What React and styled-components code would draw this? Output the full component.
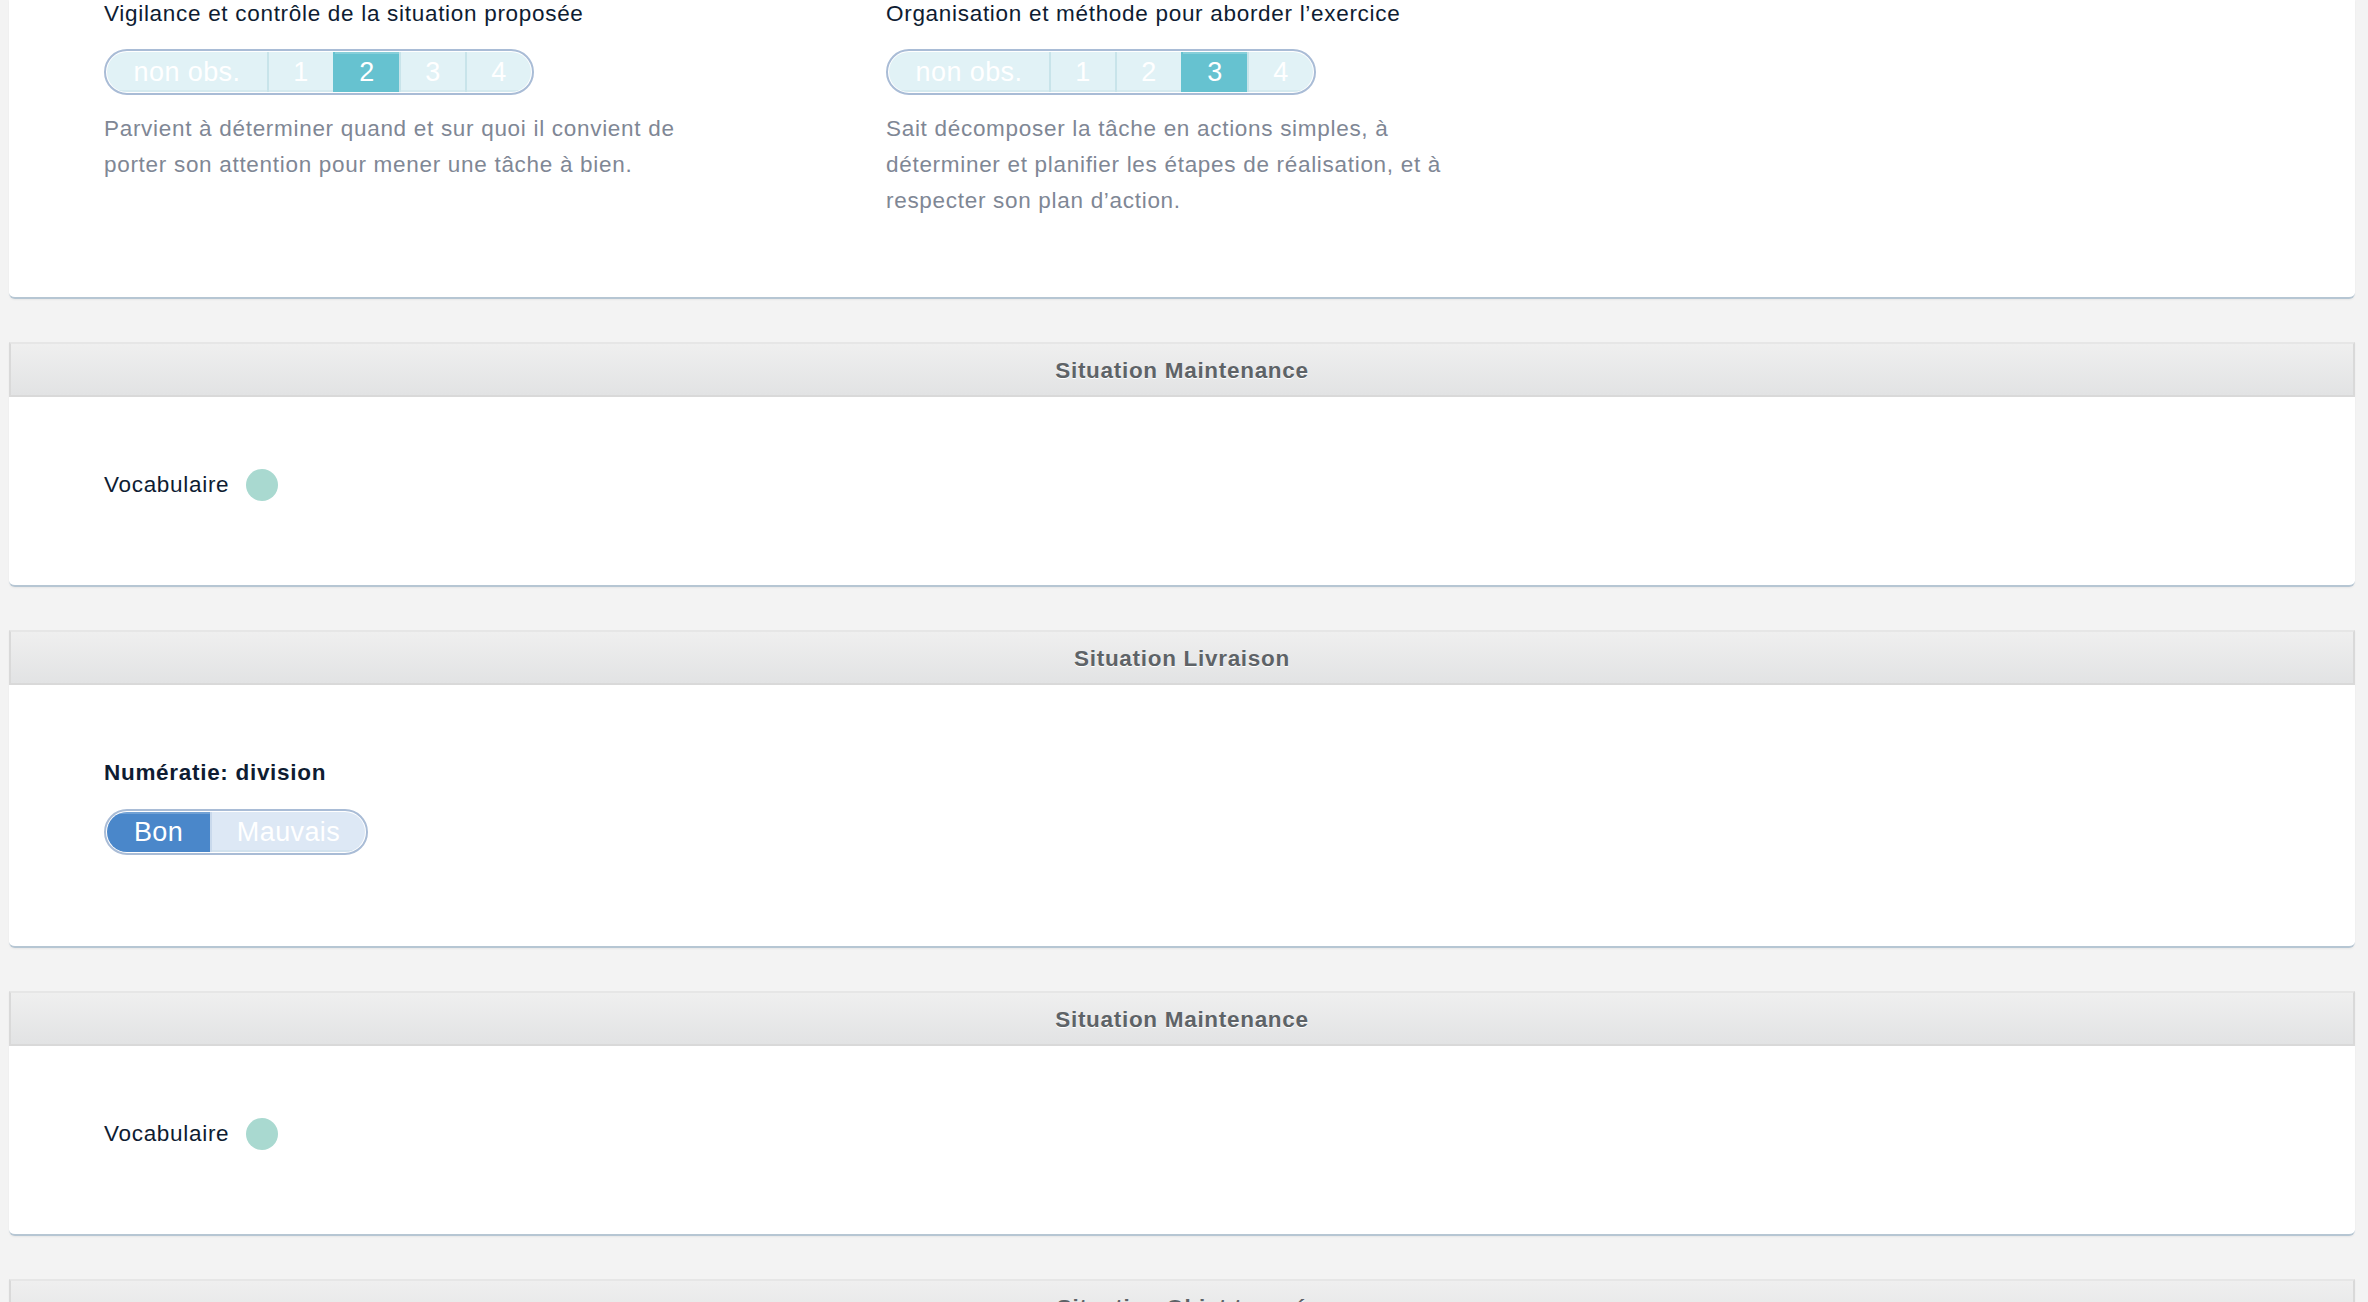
import { createGlobalStyle, styled } from "styled-components";

const GlobalStyle = createGlobalStyle`
  html, body {
    margin: 0;
    padding: 0;
    background: #f3f3f3;
  }

  body {
    font-family: "Liberation Sans", Arial, sans-serif;
    letter-spacing: 0.7px;
    -webkit-font-smoothing: antialiased;
  }
`;

const Page = styled.div`
  height: 1302px;
  overflow: hidden;
  padding: 0 13px 0 9px;
  background: #f3f3f3;
`;

// Top card with the three criteria columns
const CriteriaCard = styled.section`
  display: grid;
  grid-template-columns: repeat(3, 1fr);
  padding-bottom: 78px;

  background: #ffffff;
  border-bottom: 2px solid #b6c6d3;
  border-radius: 0 0 6px 6px;
  box-shadow: 0 1px 2px rgba(0, 0, 0, 0.05);
`;

const Criterion = styled.div`
  padding-left: 95px;
`;

const CriterionTitle = styled.h3`
  margin: 0;
  color: #0e1c32;
  font-size: 22.5px;
  font-weight: normal;
  line-height: 28px;
`;

const Description = styled.p`
  margin: 16px 0 0;
  max-width: 600px;

  color: #7f8795;
  font-size: 22.5px;
  line-height: 36px;
`;

// Pill shaped segmented control
const Segmented = styled.div`
  display: inline-flex;
  margin-top: ${(p) => p.$top || "21px"};
  padding: 1px;
  border: 2px solid #a9bcd6;
  border-radius: 24px;
  background: #ffffff;
`;

const SegmentTrack = styled.div`
  display: flex;
  overflow: hidden;
  border-radius: 22px;
`;

const tones = {
  cyan: { on: "#66c2d0", off: "#e1f2f6", line: "#c8e4ea" },
  blue: { on: "#4a87ca", off: "#dde8f5", line: "#c9d9ec" },
};

const Segment = styled.span`
  box-sizing: border-box;
  width: ${(p) => p.$width}px;
  height: 40px;
  display: flex;
  align-items: center;
  justify-content: center;

  color: #ffffff;
  font-size: 27px;
  letter-spacing: 0.4px;
  background: ${(p) => (p.$active ? tones[p.$tone].on : tones[p.$tone].off)};
  border-left: 2px solid
    ${(p) => (p.$active ? tones[p.$tone].on : tones[p.$tone].line)};
  box-shadow: ${(p) =>
    p.$active
      ? "inset 0 2px 0 rgba(255, 255, 255, 0.22)"
      : "inset 0 -2px 0 rgba(160, 200, 210, 0.18)"};

  &:first-child {
    border-left: none;
  }
`;

// Situation sections
const Section = styled.section`
  margin-top: 43px;
  background: #ffffff;
  border-bottom: 2px solid #b6c6d3;
  border-radius: 0 0 6px 6px;
  box-shadow: 0 1px 2px rgba(0, 0, 0, 0.05);
`;

const SectionHeader = styled.h2`
  box-sizing: border-box;
  height: 55px;
  margin: 0;
  padding-top: 2px;
  display: flex;
  align-items: center;
  justify-content: center;

  color: #5e6367;
  font-size: 22.5px;
  font-weight: bold;
  text-shadow: 0 1px 0 #ffffff;
  background: linear-gradient(#efefef, #e2e3e4);
  border: 2px solid #d9d9d9;
  border-top-color: #e6e6e6;
`;

const SectionBody = styled.div`
  padding: ${(p) => p.$top}px 0 ${(p) => p.$bottom}px 95px;
`;

const SkillRow = styled.div`
  display: flex;
  align-items: center;
  gap: 17px;
  height: 33px;

  color: #0e1c32;
  font-size: 22.5px;
`;

const Dot = styled.span`
  width: 32px;
  height: 32px;
  border-radius: 50%;
  background: #a9d9d0;
`;

const SkillTitle = styled.h4`
  margin: 0;
  color: #0e1c32;
  font-size: 22.5px;
  font-weight: bold;
  line-height: 27px;
`;

const criteria = [
  {
    title: "Vigilance et contrôle de la situation proposée",
    value: "2",
    text: "Parvient à déterminer quand et sur quoi il convient de porter son attention pour mener une tâche à bien.",
  },
  {
    title: "Organisation et méthode pour aborder l’exercice",
    value: "3",
    text: "Sait décomposer la tâche en actions simples, à déterminer et planifier les étapes de réalisation, et à respecter son plan d’action.",
  },
];

const levels = [
  { label: "non obs.", width: 160 },
  { label: "1", width: 66 },
  { label: "2", width: 66 },
  { label: "3", width: 66 },
  { label: "4", width: 66 },
];

const VocabularySection = ({ title }) => (
  <Section>
    <SectionHeader>{title}</SectionHeader>
    <SectionBody $top={71} $bottom={84}>
      <SkillRow>
        Vocabulaire
        <Dot />
      </SkillRow>
    </SectionBody>
  </Section>
);

const App = () => {
  return (
    <>
      <GlobalStyle />
      <Page>
        <CriteriaCard>
          {criteria.map((c) => (
            <Criterion key={c.title}>
              <CriterionTitle>{c.title}</CriterionTitle>
              <Segmented>
                <SegmentTrack>
                  {levels.map((l) => (
                    <Segment
                      key={l.label}
                      $tone="cyan"
                      $width={l.width}
                      $active={l.label === c.value}
                    >
                      {l.label}
                    </Segment>
                  ))}
                </SegmentTrack>
              </Segmented>
              <Description>{c.text}</Description>
            </Criterion>
          ))}
          <Criterion />
        </CriteriaCard>

        <VocabularySection title="Situation Maintenance" />

        <Section>
          <SectionHeader>Situation Livraison</SectionHeader>
          <SectionBody $top={74} $bottom={91}>
            <SkillTitle>Numératie: division</SkillTitle>
            <Segmented $top="23px">
              <SegmentTrack>
                <Segment $tone="blue" $width={103} $active>
                  Bon
                </Segment>
                <Segment $tone="blue" $width={155}>
                  Mauvais
                </Segment>
              </SegmentTrack>
            </Segmented>
          </SectionBody>
        </Section>

        <VocabularySection title="Situation Maintenance" />

        <Section>
          <SectionHeader>Situation Objet trouvé</SectionHeader>
          <SectionBody $top={71} $bottom={84} />
        </Section>
      </Page>
    </>
  );
};

export default App;
